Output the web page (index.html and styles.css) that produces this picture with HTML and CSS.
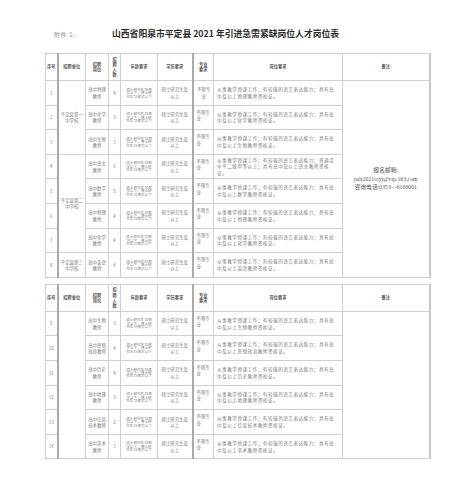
FILE: index.html
```html
<!DOCTYPE html>
<html lang="zh">
<head>
<meta charset="utf-8">
<link rel="stylesheet" href="styles.css">
</head>
<body>
<div class="page">
  <div class="head">
    <span class="label">附件 1:</span>
    <span class="title">山西省阳泉市平定县 2021 年引进急需紧缺岗位人才岗位表</span>
  </div>

  <table class="grid">
    <colgroup>
      <col class="c1"><col class="c2"><col class="c3"><col class="c4"><col class="c5"><col class="c6"><col class="c7"><col class="c8"><col class="c9">
    </colgroup>
    <tr class="hr">
      <th class="thick-r">序号</th><th>招聘单位</th><th>招聘<br>岗位</th><th>招<br>聘<br>人<br>数</th><th>年龄要求</th><th class="thick-r">学历要求</th><th>专业<br>要求</th><th>岗位要求</th><th>备注</th>
    </tr>
    <tr class="br">
      <td class="thick-r">1</td><td rowspan="3">平定县第一中学校</td><td>高中物理教师</td><td>4</td><td class="age">硕士研究生30周岁以下，博士研究生35周岁以下</td><td class="thick-r">硕士研究生及以上</td><td class="maj mid">不限专业</td><td class="req">从事教学授课工作；有较强的语言表达能力；具有高中及以上物理教师资格证。</td>
      <td rowspan="8" class="note">报名邮箱:<br>pdx2021rcyj@vip.163.com<br>咨询电话:0353—6166001</td>
    </tr>
    <tr class="br">
      <td class="thick-r">2</td><td>高中化学教师</td><td>3</td><td class="age">硕士研究生30周岁以下，博士研究生35周岁以下</td><td class="thick-r">硕士研究生及以上</td><td class="maj">不限专业</td><td class="req">从事教学授课工作；有较强的语言表达能力；具有高中及以上化学教师资格证。</td>
    </tr>
    <tr class="br">
      <td class="thick-r">3</td><td>高中生物教师</td><td>3</td><td class="age">硕士研究生30周岁以下，博士研究生35周岁以下</td><td class="thick-r">硕士研究生及以上</td><td class="maj">不限专业</td><td class="req">从事教学授课工作；有较强的语言表达能力；具有高中及以上生物教师资格证。</td>
    </tr>
    <tr class="br">
      <td class="thick-r">4</td><td rowspan="4">平定县第二中学校</td><td>高中语文教师</td><td>6</td><td class="age">硕士研究生30周岁以下，博士研究生35周岁以下</td><td class="thick-r">硕士研究生及以上</td><td class="maj">不限专业</td><td class="req">从事教学授课工作；有较强的语言表达能力；普通话水平二级甲等以上；具有高中及以上语文教师资格证。</td>
    </tr>
    <tr class="br">
      <td class="thick-r">5</td><td>高中数学教师</td><td>5</td><td class="age">硕士研究生30周岁以下，博士研究生35周岁以下</td><td class="thick-r">硕士研究生及以上</td><td class="maj">不限专业</td><td class="req">从事教学授课工作；有较强的语言表达能力；具有高中及以上数学教师资格证。</td>
    </tr>
    <tr class="br">
      <td class="thick-r">6</td><td>高中物理教师</td><td>4</td><td class="age">硕士研究生30周岁以下，博士研究生35周岁以下</td><td class="thick-r">硕士研究生及以上</td><td class="maj">不限专业</td><td class="req">从事教学授课工作；有较强的语言表达能力；具有高中及以上物理教师资格证。</td>
    </tr>
    <tr class="br">
      <td class="thick-r">7</td><td>高中化学教师</td><td>4</td><td class="age">硕士研究生30周岁以下，博士研究生35周岁以下</td><td class="thick-r">硕士研究生及以上</td><td class="maj">不限专业</td><td class="req">从事教学授课工作；有较强的语言表达能力；具有高中及以上化学教师资格证。</td>
    </tr>
    <tr class="br">
      <td class="thick-r">8</td><td>平定县第三中学校</td><td>高中英语教师</td><td>4</td><td class="age">硕士研究生30周岁以下，博士研究生35周岁以下</td><td class="thick-r">硕士研究生及以上</td><td class="maj">不限专业</td><td class="req">从事教学授课工作；有较强的语言表达能力；具有高中及以上英语教师资格证。</td>
    </tr>
  </table>

  <table class="grid second">
    <colgroup>
      <col class="c1"><col class="c2"><col class="c3"><col class="c4"><col class="c5"><col class="c6"><col class="c7"><col class="c8"><col class="c9">
    </colgroup>
    <tr class="hr">
      <th class="thick-r">序号</th><th>招聘单位</th><th>招聘<br>岗位</th><th>招<br>聘<br>人<br>数</th><th>年龄要求</th><th class="thick-r">学历要求</th><th>专业<br>要求</th><th>岗位要求</th><th>备注</th>
    </tr>
    <tr class="br">
      <td class="thick-r">9</td><td rowspan="6"></td><td>高中生物教师</td><td>3</td><td class="age">硕士研究生30周岁以下，博士研究生35周岁以下</td><td class="thick-r">硕士研究生及以上</td><td class="maj">不限专业</td><td class="req">从事教学授课工作；有较强的语言表达能力；具有高中及以上生物教师资格证。</td>
      <td rowspan="6"></td>
    </tr>
    <tr class="br">
      <td class="thick-r">10</td><td>高中思想政治教师</td><td>4</td><td class="age">硕士研究生30周岁以下，博士研究生35周岁以下</td><td class="thick-r">硕士研究生及以上</td><td class="maj">不限专业</td><td class="req">从事教学授课工作；有较强的语言表达能力；具有高中及以上思想政治教师资格证。</td>
    </tr>
    <tr class="br">
      <td class="thick-r">11</td><td>高中历史教师</td><td>4</td><td class="age">硕士研究生30周岁以下，博士研究生35周岁以下</td><td class="thick-r">硕士研究生及以上</td><td class="maj">不限专业</td><td class="req">从事教学授课工作；有较强的语言表达能力；具有高中及以上历史教师资格证。</td>
    </tr>
    <tr class="br">
      <td class="thick-r">12</td><td>高中地理教师</td><td>3</td><td class="age">硕士研究生30周岁以下，博士研究生35周岁以下</td><td class="thick-r">硕士研究生及以上</td><td class="maj">不限专业</td><td class="req">从事教学授课工作；有较强的语言表达能力；具有高中及以上地理教师资格证。</td>
    </tr>
    <tr class="br">
      <td class="thick-r">13</td><td>高中信息技术教师</td><td>2</td><td class="age">硕士研究生30周岁以下，博士研究生35周岁以下</td><td class="thick-r">硕士研究生及以上</td><td class="maj">不限专业</td><td class="req">从事教学授课工作；有较强的语言表达能力；具有高中及以上信息技术教师资格证。</td>
    </tr>
    <tr class="br">
      <td class="thick-r">14</td><td>高中美术教师</td><td>3</td><td class="age">硕士研究生30周岁以下，博士研究生35周岁以下</td><td class="thick-r">硕士研究生及以上</td><td class="maj">不限专业</td><td class="req">从事教学授课工作；有较强的语言表达能力；具有高中及以上美术教师资格证。</td>
    </tr>
  </table>
</div>
</body>
</html>
```

FILE: styles.css
```css
html, body {
  margin: 0;
  padding: 0;
  background: #ffffff;
}

.page {
  padding-top: 29px;
  font-family: "Noto Sans CJK SC", "Noto Sans", sans-serif;
}

.head {
  display: flex;
  align-items: center;
  height: 10px;
  padding-left: 54px;
  margin-bottom: 14px;
}

.label {
  width: 58px;
  font-family: "Noto Sans CJK SC", "Liberation Serif", sans-serif;
  font-size: 5.8px;
  color: #8a8a8a;
  letter-spacing: 0.8px;
}

.title {
  font-size: 8.8px;
  line-height: 10px;
  font-weight: 700;
  color: #2a2a2a;
  white-space: nowrap;
}

.grid {
  margin-left: 45px;
  width: 384px;
  table-layout: fixed;
  border-collapse: collapse;
  border: 1px solid #b8b8b8;
  border-right: 2px solid #c8c8c8;
}

.grid.second {
  margin-top: 6px;
}

.c1 { width: 12px; }
.c2 { width: 28px; }
.c3 { width: 23px; }
.c4 { width: 12px; }
.c5 { width: 37px; }
.c6 { width: 35px; }
.c7 { width: 21px; }
.c8 { width: 129px; }
.c9 { width: 87px; }

.grid th,
.grid td {
  border: 1px solid #cfcfcf;
  padding: 0 2px;
  text-align: center;
  vertical-align: middle;
  overflow: hidden;
  color: #7a7a7a;
  font-size: 4.4px;
  line-height: 6.4px;
  font-weight: 400;
}

.grid th {
  color: #555555;
  font-weight: 700;
  font-size: 4.2px;
  line-height: 5.2px;
  padding: 0 1px;
}

.grid .thick-r {
  border-right: 2px solid #aaaaaa;
}

.hr { height: 27px; }
.br { height: 24.6px; }

.grid td.age {
  font-size: 3.6px;
  line-height: 3.4px;
  padding: 0 4px;
  color: #888888;
}

.grid td.maj {
  text-align: left;
  vertical-align: top;
  padding: 3px 2px 0 3px;
  font-size: 4.4px;
}

.grid td.maj.mid {
  text-align: center;
  vertical-align: middle;
  padding-top: 0;
}

.grid td.req {
  text-align: left;
  padding: 0 3px;
  font-size: 4.6px;
  line-height: 6.7px;
  letter-spacing: 0.5px;
}

.grid td.note {
  font-family: "Liberation Serif", "Noto Sans CJK SC", serif;
  font-size: 5.8px;
  line-height: 8.5px;
  color: #5a5a5a;
  padding: 0;
  white-space: nowrap;
}
```
